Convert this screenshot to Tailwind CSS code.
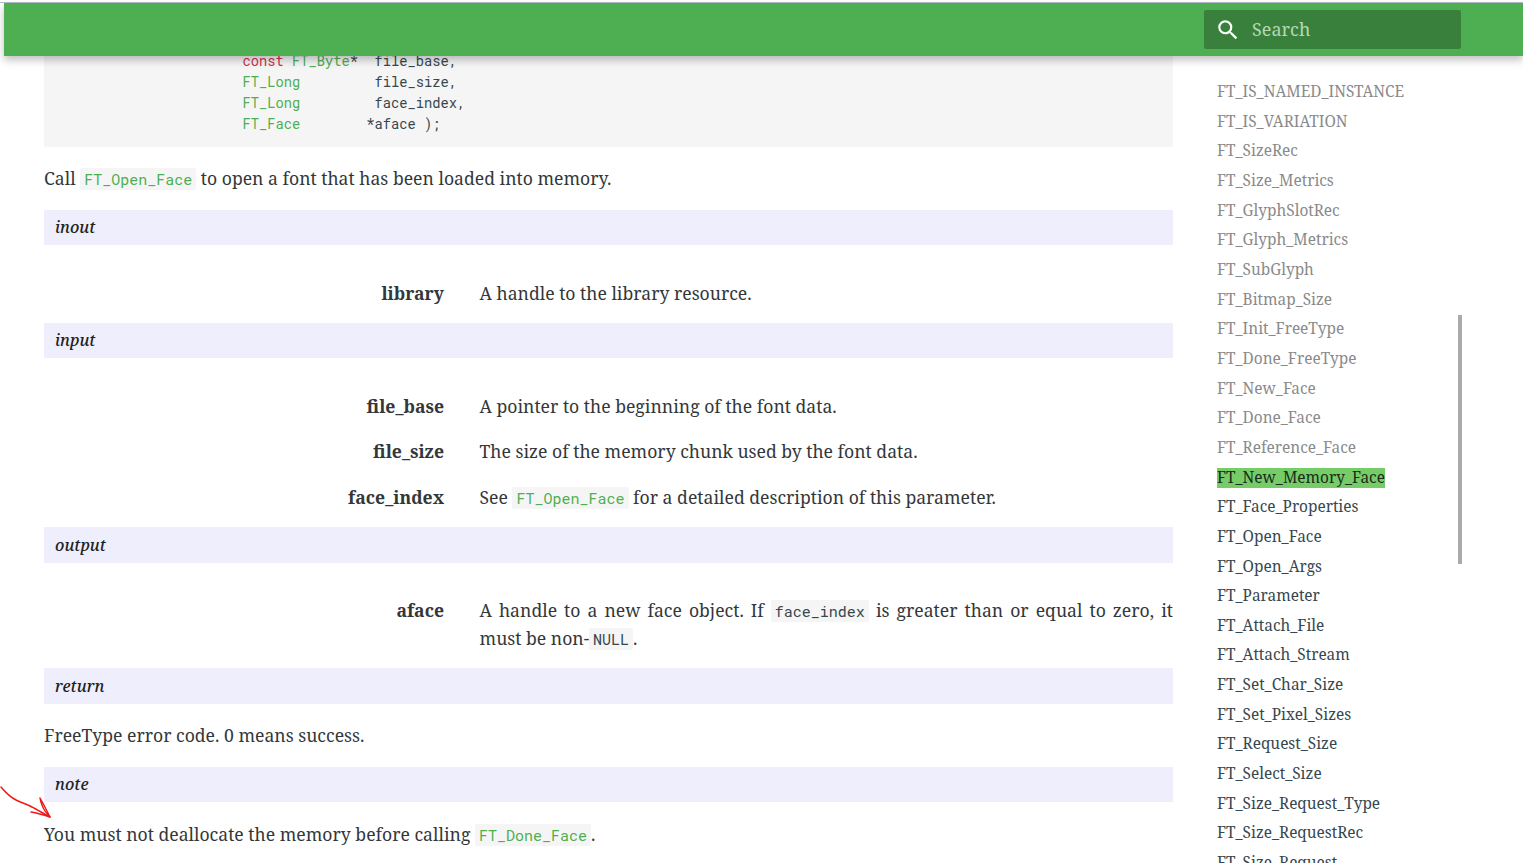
<!DOCTYPE html>
<html>
<head>
<meta charset="utf-8">
<script src="https://cdn.jsdelivr.net/npm/@tailwindcss/browser@4"></script>
</head>
<body class="bg-white">
<div class="relative w-[1523px] h-[863px] overflow-hidden bg-white text-[#33373a] font-['Noto_Serif','DejaVu_Serif_Condensed','Liberation_Serif',serif] text-[17.6px]">
  <div class="h-[2px] bg-white"></div>
  <div class="h-[1px] bg-[#b9bdc9]"></div>
  <header class="relative z-10 ml-[4px] h-[53px] bg-[#4eae52] shadow-[0_4px_8px_rgba(0,0,0,0.25)] flex justify-end pt-[7px] pr-[62px]">
    <div class="w-[257px] h-[39px] rounded-[2px] bg-[#38803b] flex items-center pl-[11px]">
      <svg class="w-[26px] h-[26px] text-white" viewBox="0 0 24 24" fill="currentColor"><path d="M15.5 14h-.79l-.28-.27A6.47 6.47 0 0 0 16 9.5 6.5 6.5 0 1 0 9.5 16c1.61 0 3.09-.59 4.23-1.57l.27.28v.79l5 4.99L20.49 19l-4.99-5zm-6 0C7.01 14 5 11.99 5 9.5S7.01 5 9.5 5 14 7.01 14 9.5 11.99 14 9.5 14z"/></svg>
      <span class="ml-[11px] text-[#b5d9b6] text-[18px]">Search</span>
    </div>
  </header>
  <div class="flex">
    <main class="ml-[44px] w-[1129px] shrink-0">
      <pre class="-mt-[5px] h-[96px] bg-[#f5f5f5] rounded-[2px] pl-[198.5px] pt-[0px] font-['Roboto_Mono','DejaVu_Sans_Mono','Liberation_Mono',monospace] text-[13.75px] leading-[21px] text-[#37474f]"><span class="text-[#d32f4f]">const</span> <span class="text-[#4caf50]">FT_Byte</span>*  file_base,
<span class="text-[#4caf50]">FT_Long</span>         file_size,
<span class="text-[#4caf50]">FT_Long</span>         face_index,
<span class="text-[#4caf50]">FT_Face</span>        *aface );</pre>
      <p class="mt-[17px] h-[28px] leading-[28px]">Call <code class="bg-[#f5f5f5] rounded-[2px] px-[4px] py-[1px] font-['Roboto_Mono','DejaVu_Sans_Mono','Liberation_Mono',monospace] text-[15px] text-[#4caf50]">FT_Open_Face</code> to open a font that has been loaded into memory.</p>
      <div class="mt-[18px] h-[35px] bg-[#eeeefd] pl-[11px] leading-[35px] italic text-[16px] font-medium text-[#222]">inout</div>
      <div class="mt-[34px] grid grid-cols-[400px_693.5px] gap-x-[35.5px] h-[28px] leading-[28px]"><b class="text-right font-bold">library</b><span>A handle to the library resource.</span></div>
      <div class="mt-[16px] h-[35px] bg-[#eeeefd] pl-[11px] leading-[35px] italic text-[16px] font-medium text-[#222]">input</div>
      <div class="mt-[34px] grid grid-cols-[400px_693.5px] gap-x-[35.5px] h-[28px] leading-[28px]"><b class="text-right font-bold">file_base</b><span>A pointer to the beginning of the font data.</span></div>
      <div class="mt-[17px] grid grid-cols-[400px_693.5px] gap-x-[35.5px] h-[28px] leading-[28px]"><b class="text-right font-bold">file_size</b><span>The size of the memory chunk used by the font data.</span></div>
      <div class="mt-[18px] grid grid-cols-[400px_693.5px] gap-x-[35.5px] h-[28px] leading-[28px]"><b class="text-right font-bold">face_index</b><span>See <code class="bg-[#f5f5f5] rounded-[2px] px-[4px] py-[1px] font-['Roboto_Mono','DejaVu_Sans_Mono','Liberation_Mono',monospace] text-[15px] text-[#4caf50]">FT_Open_Face</code> for a detailed description of this parameter.</span></div>
      <div class="mt-[16px] h-[36px] bg-[#eeeefd] pl-[11px] leading-[36px] italic text-[16px] font-medium text-[#222]">output</div>
      <div class="mt-[34px] grid grid-cols-[400px_693.5px] gap-x-[35.5px] h-[55px] leading-[27px]"><b class="text-right font-bold">aface</b><span class="text-justify">A handle to a new face object. If <code class="bg-[#f5f5f5] rounded-[2px] px-[4px] py-[1px] font-['Roboto_Mono','DejaVu_Sans_Mono','Liberation_Mono',monospace] text-[15px] text-[#37474f]">face_index</code> is greater than or equal to zero, it must be non-<code class="bg-[#f5f5f5] rounded-[2px] px-[4px] py-[1px] font-['Roboto_Mono','DejaVu_Sans_Mono','Liberation_Mono',monospace] text-[15px] text-[#37474f]">NULL</code>.</span></div>
      <div class="mt-[16px] h-[36px] bg-[#eeeefd] pl-[11px] leading-[36px] italic text-[16px] font-medium text-[#222]">return</div>
      <p class="mt-[17px] h-[28px] leading-[28px]">FreeType error code. 0 means success.</p>
      <div class="mt-[18px] h-[35px] bg-[#eeeefd] pl-[11px] leading-[35px] italic text-[16px] font-medium text-[#222]">note</div>
      <p class="mt-[18px] h-[28px] leading-[28px]">You must not deallocate the memory before calling <code class="bg-[#f5f5f5] rounded-[2px] px-[4px] py-[1px] font-['Roboto_Mono','DejaVu_Sans_Mono','Liberation_Mono',monospace] text-[15px] text-[#4caf50]">FT_Done_Face</code>.</p>
    </main>
    <aside class="relative ml-[44px] w-[241px] pt-[21px] text-[15.4px] leading-[29.66px] text-[#8a8a8a]">
      <div class="absolute left-[241px] top-[259px] w-[4px] h-[249px] bg-[#aaaaaa]"></div>
      <ul class="flex flex-col">
        <li class="h-[29.66px]">FT_IS_NAMED_INSTANCE</li>
        <li class="h-[29.66px]">FT_IS_VARIATION</li>
        <li class="h-[29.66px]">FT_SizeRec</li>
        <li class="h-[29.66px]">FT_Size_Metrics</li>
        <li class="h-[29.66px]">FT_GlyphSlotRec</li>
        <li class="h-[29.66px]">FT_Glyph_Metrics</li>
        <li class="h-[29.66px]">FT_SubGlyph</li>
        <li class="h-[29.66px]">FT_Bitmap_Size</li>
        <li class="h-[29.66px]">FT_Init_FreeType</li>
        <li class="h-[29.66px]">FT_Done_FreeType</li>
        <li class="h-[29.66px]">FT_New_Face</li>
        <li class="h-[29.66px]">FT_Done_Face</li>
        <li class="h-[29.66px]">FT_Reference_Face</li>
        <li class="h-[29.66px] flex items-center"><span class="mt-[1px] bg-[#76cc67] text-[#1b2a1b] h-[20px] leading-[20px]">FT_New_Memory_Face</span></li>
        <li class="h-[29.66px] text-[#37474f]">FT_Face_Properties</li>
        <li class="h-[29.66px] text-[#37474f]">FT_Open_Face</li>
        <li class="h-[29.66px] text-[#37474f]">FT_Open_Args</li>
        <li class="h-[29.66px] text-[#37474f]">FT_Parameter</li>
        <li class="h-[29.66px] text-[#37474f]">FT_Attach_File</li>
        <li class="h-[29.66px] text-[#37474f]">FT_Attach_Stream</li>
        <li class="h-[29.66px] text-[#37474f]">FT_Set_Char_Size</li>
        <li class="h-[29.66px] text-[#37474f]">FT_Set_Pixel_Sizes</li>
        <li class="h-[29.66px] text-[#37474f]">FT_Request_Size</li>
        <li class="h-[29.66px] text-[#37474f]">FT_Select_Size</li>
        <li class="h-[29.66px] text-[#37474f]">FT_Size_Request_Type</li>
        <li class="h-[29.66px] text-[#37474f]">FT_Size_RequestRec</li>
        <li class="h-[29.66px] text-[#37474f]">FT_Size_Request</li>
      </ul>
    </aside>
  </div>
  <svg class="absolute left-0 top-[780px] z-20" width="60" height="45" viewBox="0 0 60 45" fill="none" stroke="#f01818" stroke-width="1.5" stroke-linecap="round" stroke-linejoin="round"><path d="M1 7 C6 13 10 17 16 20 C22 23 27 24 32 27 C38 30 44 34 50 37"/><path d="M31 32 C37 33 44 35 50 37 C47 31 44 25 40 18 C41 24 44 31 49 36"/></svg>
</div>
</body>
</html>
